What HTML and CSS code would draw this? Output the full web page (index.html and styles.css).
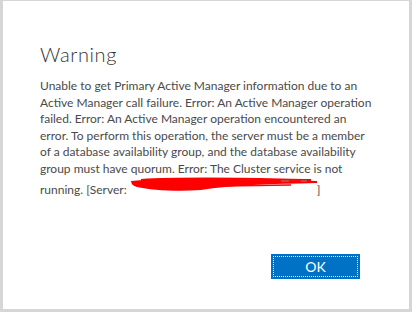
FILE: index.html
```html
<!DOCTYPE html>
<html lang="en">
<head>
  <meta charset="UTF-8">
  <title>Warning</title>
  <link rel="stylesheet" href="styles.css">
</head>
<body>

  <!-- dialog -->
  <div class="dialog">
    <h1>Warning</h1>
    <p class="message">
      Unable to get Primary Active Manager information due to an
      Active Manager call failure. Error: An Active Manager operation
      failed. Error: An Active Manager operation encountered an
      error. To perform this operation, the server must be a member
      of a database availability group, and the database availability
      group must have quorum. Error: The Cluster service is not
      running. [Server:<svg class="redact" width="186" height="16" viewBox="0 0 186 16"><path d="M0 4 C30 1 90 1 186 4 L186 6 C140 7 100 8 70 13 C45 15 20 13 6 10 C2 9 0 7 0 4 Z" fill="#ff0000"/><path d="M10 3 C60 0 120 2 180 3" stroke="#ff0000" stroke-width="2" fill="none"/><path d="M20 10 C60 9 120 9 160 8" stroke="#ff0000" stroke-width="1.5" fill="none"/><path d="M150 4 L158 4 M170 4 L176 4" stroke="#8a8a8a" stroke-width="1" fill="none"/></svg>]
    </p>
    <div class="actions">
      <button class="btn">OK</button>
    </div>
  </div>

</body>
</html>
```

FILE: styles.css
```css
* { box-sizing: border-box; }
html, body {
  margin: 0;
  padding: 0;
  background: #fff;
}
.dialog {
  width: 412px;
  height: 312px;
  border-style: solid;
  border-color: #d6d6d6;
  border-width: 1px 3px 3px 3px;
  padding: 41px 30px 30px 37px;
  display: flex;
  flex-direction: column;
  font-family: 'Lato', sans-serif;
}
h1 {
  margin: 0 0 12px;
  font-size: 20px;
  line-height: 24px;
  font-weight: 300;
  letter-spacing: 0.6px;
  color: #333;
}
.message {
  margin: 0;
  font-size: 12px;
  line-height: 16.5px;
  color: #4a4a4a;
  width: 336px;
}
.redact {
  vertical-align: 1px;
  margin-left: 4px;
}
.actions {
  margin-top: auto;
  display: flex;
  justify-content: flex-end;
  padding-right: 19px;
}
.btn {
  width: 89px;
  height: 25px;
  background: #0072c6;
  border: none;
  color: #fff;
  font-family: 'Lato', sans-serif;
  font-size: 14px;
  outline: 1px dotted #fff;
  outline-offset: -3px;
  padding: 0;
}
```
